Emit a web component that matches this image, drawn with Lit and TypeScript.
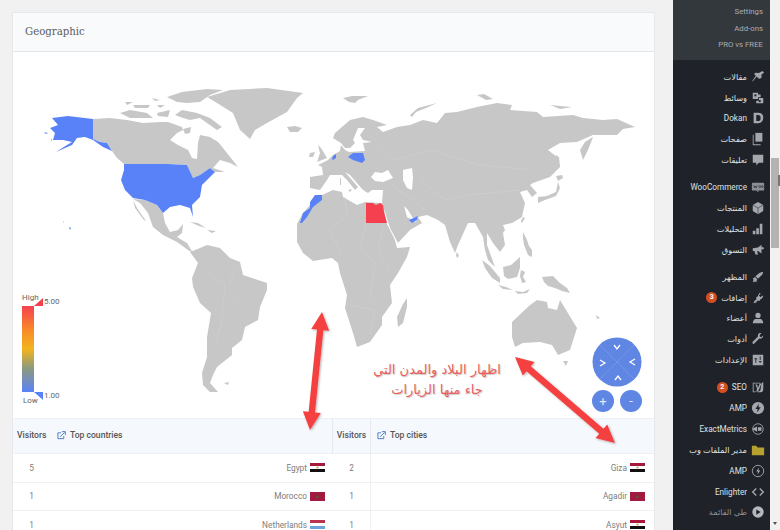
import { LitElement, html, css, svg } from "lit";
import { customElement } from "lit/decorators.js";

// map shapes use page coordinates, the svg viewBox starts where the map area starts
const LAND = [
  // greenland, iceland, svalbard
  "207,97 230,90 267,88 303,93 297,98 287,112 267,123 255,130 250,139 240,130 233,113 217,103",
  "287,127 295,126 302,128 298,132 290,132",
  "343,98 352,96 368,96 358,100 355,103 349,102",
  // canada
  "93,119 110,118 127,120 143,123 160,122 168,122 182,127 183,130 177,133 170,140 178,145 188,150 192,158 197,159 198,143 200,135 210,137 218,142 223,148 238,167 230,163 220,160 213,168 225,172 215,172 210,168 200,175 193,178 187,165 168,164 124,164 117,158 112,151 107,143 100,142 93,139",
  // arctic islands
  "175,115 182,110 197,113 210,118 222,127 217,130 207,123 200,118 190,120 183,118",
  "183,129 191,127 190,133 185,134",
  "167,97 182,92 207,89 223,90 210,95 200,102 187,103 177,102",
  "120,113 130,110 147,113 153,118 130,118",
  "133,105 150,105 148,108 135,108",
  "125,102 133,102 127,105",
  "157,113 170,110 168,117 158,116",
  "157,105 165,105 160,108",
  "152,98 160,100 155,101",
  // mexico and central america
  "133,199 145,200 157,205 163,213 165,223 170,232 178,230 183,224 182,233 177,237 187,243 193,253 188,250 177,242 163,235 153,227 148,213 140,203",
  "133,200 137,208 146,221 144,220 135,208",
  // caribbean
  "190,222 198,223 206,228 199,226",
  "207,230 216,231 212,233",
  // south america
  "190,252 200,248 207,245 220,248 230,258 240,262 243,275 267,283 267,290 260,307 258,320 245,327 242,340 232,348 232,355 222,363 217,367 213,375 210,383 218,392 210,392 203,385 202,373 207,357 207,337 211,313 200,303 193,287 192,278 198,263",
  "224,383 229,382 228,385",
  // africa
  "297,224 303,213 310,205 315,195 322,195 333,190 342,192 343,197 357,205 365,202 382,203 384,208 386,222 395,240 397,248 410,247 407,257 398,273 390,285 392,303 382,317 382,325 370,342 357,347 353,333 345,308 347,295 340,273 338,263 332,258 313,261 303,253 297,242",
  "407,298 403,304 397,317 398,327 403,323 407,307",
  // uk, ireland, islands of the mediterranean
  "318,145 321,148 327,158 317,162 320,153",
  "310,153 315,152 313,157 309,157",
  "340,178 341,178 341,185 340,185",
  "348,190 352,189 350,192",
  // eurasia
  "333,138 335,133 350,120 363,117 373,120 387,125 377,127 383,132 397,127 410,125 423,120 437,123 445,113 457,112 477,107 497,103 512,105 510,110 537,112 543,117 573,115 583,118 603,120 617,119 635,127 623,129 617,135 593,135 577,142 560,143 548,150 557,157 560,167 550,177 533,183 530,185 537,193 532,197 527,190 520,192 525,203 522,217 512,223 503,225 505,230 503,233 505,245 500,252 493,243 487,233 487,245 495,267 488,260 485,250 483,237 475,223 468,223 458,245 455,253 450,242 445,225 438,220 427,215 418,217 422,223 410,230 398,243 390,228 385,212 382,203 383,190 372,190 368,193 363,190 350,175 345,172 358,187 355,190 347,180 342,175 330,175 327,180 320,190 310,188 310,177 323,175 322,167 318,165 328,160 333,155 340,151 341,145 345,150 349,152 365,151 363,143 372,142 363,140 360,135 365,128 358,128 353,140 355,143 350,148 345,148 341,143",
  // russian islands
  "410,115 418,108 437,103 426,108 416,112 412,117",
  "477,95 484,94 493,99 486,100",
  "550,105 560,106 572,107 560,109",
  // kamchatka side
  "593,137 585,142 580,150 583,160 587,152 590,145",
  // japan and sakhalin
  "556,155 559,157 560,167 557,165",
  "556,176 562,175 563,178 558,181",
  "558,182 556,192 547,196 538,197 538,203 545,200 556,196 560,188",
  "523,217 525,218 522,223 521,221",
  "457,252 459,256 457,258 456,255",
  // philippines, indonesia
  "523,232 527,240 529,246 532,250 532,257 528,255 524,245 523,238",
  "503,267 511,265 520,257 520,268 517,277 508,279 504,276",
  "482,260 490,266 500,278 500,283 492,278 485,268",
  "498,285 506,287 513,290 503,289",
  "521,270 525,272 523,277 526,282 522,283 520,276",
  "515,291 523,292 530,289 527,293 518,294",
  "542,277 553,276 560,283 567,288 570,293 562,291 555,288 548,286 544,282",
  // australia
  "512,322 530,305 537,300 547,302 548,308 557,310 560,300 577,328 570,350 558,355 552,345 540,342 523,343 515,347 512,337",
  "563,361 568,361 566,366",
  "596,315 600,318 597,319",
];

// seas and lakes are painted over the land
const WATER = [
  "371,177 375,172 382,173 388,170 393,178 383,182 375,181", // black sea
  "403,170 412,168 413,177 412,190 407,188 403,180", // caspian
  "404,206 408,210 413,218 418,217 416,222 407,217", // persian gulf
];

const BLUE = [
  "52,118 68,116 93,119 93,139 100,142 107,143 112,151 103,147 93,140 85,137 77,138 72,145 56,152 67,145 72,142 63,140 53,140 55,133 50,128 58,125",
  "124,164 168,164 187,165 193,178 200,175 210,168 215,172 210,177 202,185 200,197 192,205 193,217 190,208 180,205 170,207 163,213 157,205 145,200 133,198 125,190 121,180 124,170",
  "300,223 303,213 310,208 310,202 315,195 322,195 322,200 313,207 307,217 302,223",
  "332,159 333,156 336,154 336,158 333,160",
  "348,157 353,153 363,153 365,160 362,163 353,160",
  "409,220 418,216 417,220 412,223",
  "44,132 48,133 46,134",
  "51,139 52,140 51,141",
  "63,221 64,223 63,222",
  "69,227 71,228 70,230",
];

const EGYPT = "366,203 373,203 376,205 380,203 383,205 384,212 387,223 366,223";

// faint country borders
const BORDERS = [
  "M345 197 L347 215 L330 230 L340 252",
  "M366 223 L360 250 L375 262 L370 300",
  "M384 223 L378 250 L392 275",
  "M350 305 L375 310 L370 335",
  "M205 270 L225 285 L222 320 L215 345",
  "M235 268 L228 290 L245 305",
  "M370 135 L395 160 L430 150 L480 165 L530 170",
  "M420 180 L445 200 L470 195 L520 190",
  "M392 185 L410 198 L425 210",
];

const MENU_TOP = ["Settings", "Add-ons", "PRO vs FREE"];

type MenuItem = { label: string; icon: string; badge?: string; dim?: boolean };

const MENU_GROUPS: MenuItem[][] = [
  [
    { label: "مقالات", icon: "pin" },
    { label: "وسائط", icon: "media" },
    { label: "Dokan", icon: "dokan" },
    { label: "صفحات", icon: "pages" },
    { label: "تعليقات", icon: "comment" },
  ],
  [
    { label: "WooCommerce", icon: "woo" },
    { label: "المنتجات", icon: "box" },
    { label: "التحليلات", icon: "bars" },
    { label: "التسوق", icon: "horn" },
  ],
  [
    { label: "المظهر", icon: "brush" },
    { label: "إضافات", icon: "plug", badge: "3" },
    { label: "أعضاء", icon: "user" },
    { label: "أدوات", icon: "wrench" },
    { label: "الإعدادات", icon: "sliders" },
  ],
  [
    { label: "SEO", icon: "yoast", badge: "2" },
    { label: "AMP", icon: "amp" },
    { label: "ExactMetrics", icon: "exact" },
    { label: "مدير الملفات وب", icon: "folder" },
    { label: "AMP", icon: "ampline" },
    { label: "Enlighter", icon: "code" },
    { label: "طي القائمة", icon: "play", dim: true },
  ],
];

const ICONS: Record<string, unknown> = {
  pin: svg`<path d="M13 1 L15 3 L12 5 L12 9 L9 10 L6.5 7.5 L2 13 L1.5 12.5 L5.5 6.5 L3.5 4.5 L5 3 L9 3.5 Z"/>`,
  media: svg`<path d="M2 2h6v2h3v3H8v2H2z M9 8h5v6H6v-3h3z"/><circle cx="5" cy="5" r="1.2" fill="#1f2329"/><circle cx="10" cy="11.5" r="1.3" fill="#1f2329"/>`,
  dokan: svg`<path d="M3 2h5c4 0 6 2 6 5.5S12 14 8 14H3z M6 4.5v7h2c2 0 3-1 3-3.5s-1-3.5-3-3.5z" fill-rule="evenodd"/>`,
  pages: svg`<path d="M5 1h8v10H5z"/><path d="M3 3v11h8v1H2V3z"/>`,
  comment: svg`<path d="M2 2h12v9H9l-3 3v-3H2z"/>`,
  woo: svg`<rect x="1" y="3" width="14" height="9" rx="1" fill="#8c9096"/><path d="M3 6l1 3 1-2 1 2 1-3 M9 7.5a1 1 0 102 0a1 1 0 10-2 0 M12 7.5a1 1 0 102 0a1 1 0 10-2 0" fill="none" stroke="#1f2329" stroke-width=".7"/><path d="M6 12h3l-1 2z" fill="#8c9096"/>`,
  box: svg`<path d="M8 1l6 3.5v7L8 15l-6-3.5v-7z"/><path d="M2 4.5L8 8l6-3.5M8 8v7" fill="none" stroke="#1f2329" stroke-width=".6"/>`,
  bars: svg`<path d="M2 10h3v4H2z M6 7h3v7H6z M10 2h3v12h-3z"/>`,
  horn: svg`<path d="M2 6l6-1 4-3v10l-4-3H7l1 4H5L4 9H2z"/><circle cx="13" cy="6" r="1.5"/>`,
  brush: svg`<path d="M14 2l-1 3-5 5-3-3 5-4z M7 10.5L4.5 8 2 10l1 1-1 3 3-1 1 1z"/>`,
  plug: svg`<path d="M10 2l1 1-2 2 2 2 2-2 1 1-2 3-1 0-1 2-3 0-1 2-3 1 1-3 2-1 0-3 2-1 0-1z"/>`,
  user: svg`<circle cx="8" cy="5" r="3"/><path d="M2 14c0-3 2-5 3-5h6c1 0 3 2 3 5z"/>`,
  wrench: svg`<path d="M14 4l-2.5 2-1.5-1 0-2 2-1.5C9 .5 7.5 2.500 8 5L2 11c-1 1 0 3 1.500 2.500L9.500 7.500c2.500.5 4.500-1 4.500-3.500z"/>`,
  sliders: svg`<path d="M2 2h12v12H2z M4 6h3v1H6v4H5V7H4z M9 9h3v1h-1v1h-1v-1H9z M10 4h1v4h-1z" fill-rule="evenodd"/>`,
  yoast: svg`<path d="M2 3h9l-1 1H3v9h3l-1 1H2z M12 4l2-2v8c0 3-1 4-3 4H7l1-1c2 0 3-1 3-3z"/><path d="M5 5h2l1 4 2-5h2l-4 9H6l1-3z"/>`,
  amp: svg`<circle cx="8" cy="8" r="7"/><path d="M9 3L5 9h2.5L7 13l4-6H8.5z" fill="#1f2329"/>`,
  exact: svg`<path d="M8 2a6 6 0 11-.1 12A6 6 0 018 2z" fill="none" stroke="currentColor" stroke-width="1"/><path d="M1 8l6-3v6z M8 6h4v4H8z"/>`,
  folder: svg`<path d="M1 3h5l1.5 2H15v9H1z" fill="#b5a030"/>`,
  ampline: svg`<circle cx="8" cy="8" r="6.5" fill="none" stroke="currentColor"/><path d="M9 4L6 8.5h2L7.5 12 10.5 7.500h-2z"/>`,
  code: svg`<path d="M6 4L2 8l4 4 M10 4l4 4-4 4" fill="none" stroke="currentColor" stroke-width="1.6"/>`,
  play: svg`<circle cx="8" cy="8" r="6.5" fill="#b4b9be"/><path d="M6 5l5 3-5 3z" fill="#1f2329"/>`,
};

@customElement("admin-menu")
class AdminMenu extends LitElement {
  static styles = css`
    :host {
      display: block;
      width: 97px;
      height: 530px;
      background: #1f2329;
      font-family: Roboto, "DejaVu Sans", sans-serif;
      overflow: hidden;
    }
    .top {
      height: 60px;
      box-sizing: border-box;
      padding-top: 4px;
      background: #33383d;
    }
    .top div {
      height: 16.5px;
      line-height: 16.5px;
      padding-right: 7px;
      text-align: right;
      font-size: 7.8px;
      color: #a9adb2;
    }
    .groups {
      padding-top: 6.2px;
      display: flex;
      flex-direction: column;
      gap: 6px;
    }
    .item {
      height: 20.9px;
      display: flex;
      align-items: center;
      justify-content: flex-end;
      font-size: 8.2px;
      color: #dfe1e3;
      white-space: nowrap;
    }
    .item.dim {
      color: #8d9297;
    }
    .label {
      padding-right: 4px;
      line-height: 12px;
    }
    .icon {
      width: 14px;
      height: 14px;
      margin-right: 5px;
      flex: none;
      fill: #a3a8ad;
      color: #a3a8ad;
    }
    .badge {
      width: 11px;
      height: 11px;
      margin-right: 4px;
      border-radius: 50%;
      background: #d54e21;
      color: #fff;
      font-size: 7px;
      font-weight: 700;
      line-height: 11px;
      text-align: center;
    }
  `;

  render() {
    return html`
      <div class="top">${MENU_TOP.map((t) => html`<div>${t}</div>`)}</div>
      <div class="groups">
        ${MENU_GROUPS.map(
          (g) => html`<div>
            ${g.map(
              (it) => html`<div class="item ${it.dim ? "dim" : ""}">
                ${it.badge ? html`<span class="badge">${it.badge}</span>` : ""}
                <span class="label">${it.label}</span>
                <svg class="icon" viewBox="0 0 16 16">${ICONS[it.icon]}</svg>
              </div>`
            )}
          </div>`
        )}
      </div>
    `;
  }
}

@customElement("geo-map")
class GeoMap extends LitElement {
  static styles = css`
    :host {
      display: block;
      height: 366px;
    }
    svg {
      display: block;
      width: 641px;
      height: 366px;
    }
    .land {
      filter: blur(0.35px);
    }
    text {
      font-family: Roboto, "Liberation Sans", sans-serif;
      font-size: 8px;
      fill: #666;
    }
    .ctl {
      font-size: 13px;
      fill: #dfe7fb;
      text-anchor: middle;
    }
  `;

  render() {
    return html`
      <svg viewBox="13 52 641 366">
        <defs>
          <linearGradient id="legend" x1="0" y1="0" x2="0" y2="1">
            <stop offset="0" stop-color="#f5414f" />
            <stop offset="0.28" stop-color="#f88a28" />
            <stop offset="0.5" stop-color="#f2b51e" />
            <stop offset="0.72" stop-color="#8d9a7c" />
            <stop offset="1" stop-color="#5a82f8" />
          </linearGradient>
        </defs>
        <g class="land">
          ${LAND.map((p) => svg`<polygon points=${p} fill="#c7c7c7" />`)}
          ${BORDERS.map((d) => svg`<path d=${d} fill="none" stroke="#d0d0d0" stroke-width="0.6" />`)}
          ${WATER.map((p) => svg`<polygon points=${p} fill="#fff" />`)}
          ${BLUE.map((p) => svg`<polygon points=${p} fill="#5a82f8" />`)}
          <polygon points=${EGYPT} fill="#f5414f" />
        </g>

        <rect x="22" y="306" width="12" height="86" fill="url(#legend)" />
        <polygon points="34,306 43,298 43,306" fill="#f5414f" />
        <polygon points="34,392 43,392 43,400" fill="#5a82f8" />
        <text x="22" y="300">High</text>
        <text x="23" y="403">Low</text>
        <text x="44" y="304">5.00</text>
        <text x="44" y="398">1.00</text>

        <circle cx="617" cy="362" r="24.5" fill="#5f86e3" />
        <path d="M600 345 L634 379 M634 345 L600 379" stroke="#7c9de9" stroke-width="0.7" />
        <path
          d="M614 345 L617 349 L620 345 M600 360 L605 363 L600 366 M635 359 L630 362 L635 365 M615 380 L618 376 L621 380"
          fill="none"
          stroke="#fff"
          stroke-width="1.3"
        />
        <circle cx="603" cy="401" r="11" fill="#5f86e3" />
        <circle cx="631" cy="401" r="11" fill="#5f86e3" />
        <text class="ctl" x="603" y="405.5">+</text>
        <text class="ctl" x="631" y="405">-</text>
      </svg>
    `;
  }
}

type Row = { visitors: number; name: string; flag: string };

const COUNTRIES: Row[] = [
  { visitors: 5, name: "Egypt", flag: "eg" },
  { visitors: 1, name: "Morocco", flag: "ma" },
  { visitors: 1, name: "Netherlands", flag: "nl" },
];

const CITIES: Row[] = [
  { visitors: 2, name: "Giza", flag: "eg" },
  { visitors: 1, name: "Agadir", flag: "ma" },
  { visitors: 1, name: "Asyut", flag: "eg" },
];

function flag(code: string) {
  return html`<svg class="flag" viewBox="0 0 15 9">
    ${code === "eg"
      ? svg`<rect width="15" height="3" fill="#a8183a"/><rect y="3" width="15" height="3" fill="#fff"/><rect y="6" width="15" height="3" fill="#111"/><rect x="6.5" y="3.8" width="2" height="1.4" fill="#b59a4a"/>`
      : code === "ma"
      ? svg`<rect width="15" height="9" fill="#a11a3f"/><circle cx="7.5" cy="4.5" r="1.5" fill="#6d4a3a"/>`
      : svg`<rect width="15" height="3" fill="#b8344f"/><rect y="3" width="15" height="3" fill="#fff"/><rect y="6" width="15" height="3" fill="#6fa3dc"/>`}
  </svg>`;
}

const extLink = html`<svg class="ext" viewBox="0 0 10 10">
  <path d="M7.5 5.5v3h-6.5v-6.5h3.5" fill="none" stroke="#3f78c4" stroke-width="1" />
  <path d="M3.5 6.5L8.500 1.500M5.500 .7h3.800v3.800" fill="none" stroke="#3f78c4" stroke-width="1" />
</svg>`;

@customElement("app-root")
export class AppRoot extends LitElement {
  static styles = css`
    :host {
      display: flex;
      height: 530px;
      overflow: hidden;
      background: #f1f1f1;
      font-family: Roboto, "Liberation Sans", sans-serif;
    }
    .content {
      width: 673px;
      flex: none;
      box-sizing: border-box;
      padding: 13px 19px 0 13px;
    }
    .card {
      position: relative;
      height: 560px;
      background: #fff;
      box-shadow: 0 0 0 1px #e7e8ea;
    }
    .card-head {
      height: 39px;
      box-sizing: border-box;
      padding-left: 12px;
      border-bottom: 1px solid #e4e6e8;
      background: #f9fafb;
      font-family: "DejaVu Serif", serif;
      font-size: 10.2px;
      line-height: 38px;
      color: #5c5c5c;
    }
    .table {
      display: grid;
      grid-template-columns: 320px 38px 283px;
      font-size: 8.3px;
      color: #7d7d7d;
    }
    .th {
      height: 36px;
      box-sizing: border-box;
      padding-bottom: 2px;
      display: flex;
      align-items: center;
      background: #f5f8fc;
      border-top: 1px solid #edf0f4;
      border-bottom: 1px solid #edf0f4;
      border-right: 1px solid #e6eaf0;
      font-size: 8.6px;
      font-weight: 500;
      color: #555;
      white-space: nowrap;
    }
    .th.last {
      border-right: none;
      padding-left: 6px;
    }
    .visitors-head {
      width: 44px;
      padding-left: 4px;
      box-sizing: border-box;
    }
    .th.narrow {
      justify-content: center;
    }
    .ext {
      width: 9px;
      height: 9px;
      margin-right: 4px;
    }
    .td {
      height: 28.5px;
      box-sizing: border-box;
      display: flex;
      align-items: center;
      justify-content: flex-end;
      border-bottom: 1px solid #eef0f3;
      border-right: 1px solid #eef0f3;
    }
    .td.wide {
      justify-content: space-between;
      padding-right: 8px;
      border-right: none;
    }
    .td.num {
      justify-content: center;
    }
    .td.city {
      padding-right: 9px;
      border-right: none;
    }
    .count {
      width: 37px;
      text-align: center;
    }
    .name {
      display: flex;
      align-items: center;
    }
    .flag {
      width: 15px;
      height: 9px;
      margin-left: 3px;
    }
    .overlay {
      position: absolute;
      left: 0;
      top: 0;
      width: 641px;
      height: 517px;
      pointer-events: none;
      overflow: visible;
    }
    .note {
      position: absolute;
      left: 339px;
      top: 347px;
      width: 170px;
      font-family: "DejaVu Sans", sans-serif;
      font-size: 13px;
      line-height: 20px;
      color: #e8605f;
      text-align: center;
      text-shadow: 1px 1px 1px rgba(0, 0, 0, 0.2);
    }
    .scrollbar {
      position: relative;
      flex: 1;
      background: #f1f1f1;
    }
    .thumb {
      position: absolute;
      left: 1px;
      right: 1px;
      top: 158px;
      height: 90px;
      background: #b3b3b3;
    }
    .notch {
      position: absolute;
      right: 0;
      top: 175px;
      width: 2px;
      height: 11px;
      background: #777;
    }
    .down {
      position: absolute;
      left: 3px;
      top: 522px;
      width: 0;
      height: 0;
      border-left: 2.5px solid transparent;
      border-right: 2.5px solid transparent;
      border-top: 3px solid #505050;
    }
  `;

  private arrow(x1: number, y1: number, x2: number, y2: number) {
    // double headed arrow, tips at both points
    const dx = x2 - x1;
    const dy = y2 - y1;
    const len = Math.hypot(dx, dy);
    const ux = dx / len;
    const uy = dy / len;
    const nx = -uy;
    const ny = ux;
    const head = 18;
    const hw = 9;
    const sw = 3.2;
    const p = (a: number, b: number) =>
      `${x1 + ux * a + nx * b},${y1 + uy * a + ny * b}`;
    const pts = [
      p(0, 0),
      p(head, hw),
      p(head, sw),
      p(len - head, sw),
      p(len - head, hw),
      p(len, 0),
      p(len - head, -hw),
      p(len - head, -sw),
      p(head, -sw),
      p(head, -hw),
    ].join(" ");
    return svg`<polygon points=${pts} fill="#f4403f" filter="url(#soft)" />`;
  }

  private rows(list: Row[], other: Row[]) {
    return list.map(
      (r, i) => html`
        <div class="td wide">
          <span class="count">${r.visitors}</span>
          <span class="name">${r.name}${flag(r.flag)}</span>
        </div>
        <div class="td num">${other[i].visitors}</div>
        <div class="td city">
          <span class="name">${other[i].name}${flag(other[i].flag)}</span>
        </div>
      `
    );
  }

  render() {
    return html`
      <div class="content">
        <div class="card">
          <div class="card-head">Geographic</div>
          <geo-map></geo-map>
          <div class="table">
            <div class="th">
              <span class="visitors-head">Visitors</span>${extLink}Top countries
            </div>
            <div class="th narrow">Visitors</div>
            <div class="th last">${extLink}Top cities</div>
            ${this.rows(COUNTRIES, CITIES)}
          </div>
          <svg class="overlay" viewBox="13 13 641 517">
            <defs>
              <filter id="soft" x="-20%" y="-20%" width="140%" height="140%">
                <feDropShadow dx="1" dy="1" stdDeviation="1" flood-color="#000" flood-opacity="0.3" />
              </filter>
            </defs>
            ${this.arrow(322, 312, 310, 430)} ${this.arrow(515, 357, 615, 443)}
          </svg>
          <div class="note" dir="rtl">اظهار البلاد والمدن التي<br />جاء منها الزيارات</div>
        </div>
      </div>
      <admin-menu></admin-menu>
      <div class="scrollbar">
        <div class="thumb"></div>
        <div class="notch"></div>
        <div class="down"></div>
      </div>
    `;
  }
}
